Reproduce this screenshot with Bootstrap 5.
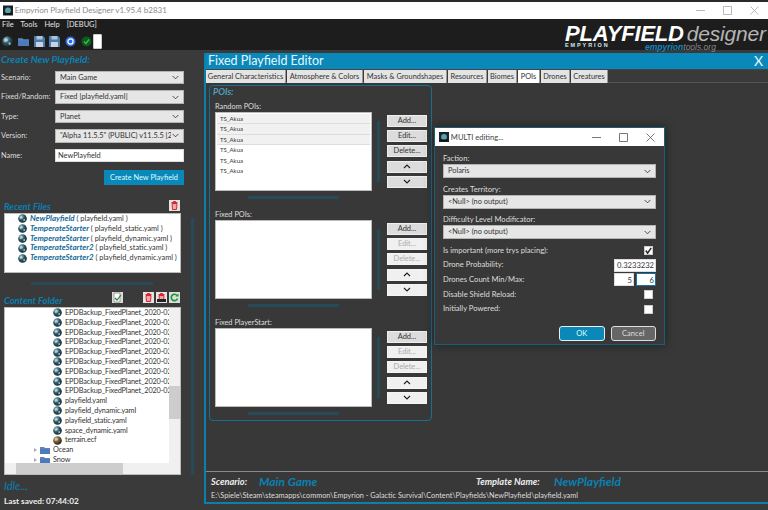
<!DOCTYPE html>
<html lang="en">
<head>
<meta charset="utf-8">
<title>Empyrion Playfield Designer</title>
<link href="https://cdn.jsdelivr.net/npm/bootstrap@5.3.0/dist/css/bootstrap.min.css" rel="stylesheet">
<script src="https://cdn.jsdelivr.net/npm/bootstrap@5.3.0/dist/js/bootstrap.bundle.min.js"></script>
<style>
html,body{margin:0;width:768px;height:510px;overflow:hidden;background:#3a3a3a;font-family:"Lato","Noto Sans",sans-serif;font-size:7.4px;color:#e8e8e8;line-height:1.2}
.defsv{display:block;width:0;height:0}
.appwin{width:768px;height:510px;position:relative}
.ttl{height:19px;background:#fff;border-top:2px solid #2a2a2a;color:#8b8b8b;font-size:8px;padding:0 0 0 3px}
.ctl{width:27px;height:9px;flex:none}
.ctl svg{width:9px;height:9px;display:block;margin:0 auto}
.hdr{height:31px;background:#1d1d1d;color:#ddd}
.mnu{gap:7px;padding:2px 0 0 2px;height:13px;font-size:7.4px;color:#e4e4e4}
.tool{gap:4.8px;padding:4px 0 0 2px}
.tool svg{width:11px;height:11px}
.tinybox{width:9px;height:15px;background:#fff;margin:-2px 0 0 -4px;border:1px solid #ccc;border-radius:1px}
.logo{position:relative;width:203px;color:#fff}
.logo-a{font:italic 700 22px/.8 "Liberation Sans",sans-serif;color:#fff;padding-top:6px;letter-spacing:-.2px;white-space:nowrap}
.logo-a i{font-weight:400;color:#b5b5b5;font-size:21px;letter-spacing:-.2px;margin-left:3px}
.logo-b{position:absolute;left:0;top:24px;font:700 5.5px/1 "Liberation Sans",sans-serif;letter-spacing:1.9px;color:#cfe6f2}
.logo-c{position:absolute;left:80px;top:24px;font:italic 700 8.5px/1 "Liberation Sans",sans-serif;color:#1187bd}
.logo-c span{font-weight:400;color:#888}
.mainrow{height:460px}
.leftp{width:204px;flex:none}
.leftc{width:184px;flex:none;padding-top:1px}
.splitv{width:3px;height:257px;margin:168px 0 0 7px;background:#274a58}
.hd{font:italic 700 9.8px/17px "Lato","Noto Sans",sans-serif;color:#0a81b3;height:20px;padding-left:1px}
.frm{gap:6px}
.frow{height:13.4px}
.frow label{width:55px;flex:none;padding-left:1px;color:#ddd;white-space:nowrap;line-height:13.4px}
.form-select.pick,.form-control.pick{font-size:7.4px;line-height:1;padding:0 12px 0 4px;height:100%;min-height:0;border-radius:0;border:1px solid #b4b4b4;background-color:#e6e6e6;color:#333;background-position:right 4px center;background-size:7px 7px;box-shadow:none}
.form-control.pick{background:#fff;padding:0 2px;border-color:#ddd}
.btn.newbtn{display:block;width:80px;height:15px;margin:8px 0 0 104px;padding:0;font-size:7.4px;line-height:13px;border-radius:0;background:#0a88ba;border:1px solid #0a88ba;color:#dff;white-space:nowrap}
.hd2{font:italic 700 9.4px/13px "Lato","Noto Sans",sans-serif;color:#0a7fb0;height:13px;margin-top:15px;padding:0 4px 0 4px}
.hd2b{height:15px;margin-top:7px;line-height:17px}
.ib{width:11px;height:11px;display:block}
.icgap{gap:2px}
.ibdoc{margin-right:18px}
.rbox{margin-left:4px;width:177px;height:60px;background:#fff;border:1px solid #bbb;padding:0 0 0 13px;color:#333}
.rrow{height:9.8px;white-space:nowrap;line-height:9.8px;font-size:7.3px}
.rrow svg,.trow svg{width:9px;height:9px;flex:none;margin-right:3px}
.rrow b{font:italic 700 8px/9.8px "Lato","Noto Sans",sans-serif;color:#146a98}
.hbar{height:3px;background:#274a58}
.hb1{width:122px;margin:9px 0 0 31px}
.treebox{margin-left:4px;width:177px;height:168px;background:#fff;border:1px solid #bbb;position:relative;overflow:hidden;color:#333}
.treein{width:165px;height:156px;overflow:hidden}
.trow{height:9.8px;line-height:9.8px;white-space:nowrap;padding-left:48px;font-size:7.3px;letter-spacing:-.12px}
.trow.fld{padding-left:29px}
.trow.fld svg{width:10px;height:8px}
.tri{width:0;height:0;border-left:3px solid #aaa;border-top:2.5px solid transparent;border-bottom:2.5px solid transparent;margin-right:3px}
.sbv{position:absolute;right:0;top:0;width:11px;height:155px;background:#f0f0f0}
.sbv i{position:absolute;left:0;top:78px;width:11px;height:33px;background:#cdcdcd}
.sbh{position:absolute;left:0;bottom:0;width:175px;height:11px;background:#f0f0f0}
.sbh i{position:absolute;left:11px;top:0;width:107px;height:11px;background:#cdcdcd}
.idle{font:italic 400 11px/12px "Lato","Noto Sans",sans-serif;color:#0a7fb0;margin-top:5px;padding-left:4px}
.saved{font:700 8.2px/10px "Lato","Noto Sans",sans-serif;color:#eee;margin-top:4px;padding-left:4px}
.editor{margin-top:3px;height:451px;border-left:2px solid #0a80ad;border-bottom:2px solid #0a80ad;background:#383838;min-width:0}
.edhead{height:16px;background:#0a88ba;color:#e6f7ff;font-size:12.5px;line-height:16px;padding:0 5px 0 2px}
.edhead span:last-child{font-size:14px}
.tabs{height:14px;border-top:1px solid #444;border-bottom:1px solid #555;padding:0;gap:1px;background:#3a3a3a}
.tabx{height:13px;background:#e4e4e4;color:#333;font-size:7.4px;line-height:13px;text-align:center;white-space:nowrap;overflow:hidden;border-right:1px solid #999}
.tabx.on{background:#fff}
.tw1{width:80px}.tw2{width:76px}.tw3{width:83px}.tw4{width:39px}.tw5{width:29px}.tw6{width:22px}.tw7{width:29px}.tw8{width:37px}
.grp{margin:2px 0 0 3px;width:223px;height:336px;border:1px solid #17708f;border-radius:4px;padding:0 0 0 5px}
.grpt{font:italic 700 9px/12px "Lato","Noto Sans",sans-serif;color:#4d9fbe;height:14px;margin-left:-2px}
.seclab{height:12px;line-height:13px;color:#ddd;font-size:7.4px}
.lbx{width:157px;height:79px;background:#fff;border:1px solid #bbb;padding:1px;color:#333}
.lit{height:10.4px;line-height:10px;font-size:6px;padding-left:3px;border-bottom:1px solid transparent}
.lit.sel{background:#f1f1f1;border-bottom-color:#ddd}
.vbar{width:3px;height:61px;margin:9px 0 0 5px;background:#274a58}
.btcol{margin:3px 0 0 7px;width:40px;gap:3.2px}
.btn.mini{height:12px;width:40px;padding:0;font-size:7.4px;line-height:10px;border-radius:0;background:#dcdcdc;border:1px solid #eee;color:#333;display:flex;align-items:center;justify-content:center}
.btn.mini.off{background:#f0f0f0;color:#aaa;opacity:1;border-color:#f4f4f4}
.btn.mini.off.dk{color:#222}
.btn.mini svg{width:8px;height:5px}
.hb2{width:91px;margin:5px 0 9px 33px}
.hb3{margin-bottom:0}
.edfoot{height:31px;border-top:1px solid #8a8a8a;padding:2px 0 0 5px}
.fl{font:italic 700 9.3px/15px "Lato","Noto Sans",sans-serif;color:#eee;white-space:nowrap}
.fv{font:italic 700 12px/15px "Lato","Noto Sans",sans-serif;color:#0a81b3;white-space:nowrap}
.fw1{width:48px}.fw2{width:217px}.fw3{width:78px}
.fpath{font-size:7.3px;line-height:13px;color:#ddd;white-space:nowrap}
.dlg{position:absolute;left:434px;top:127px;width:231px;height:218px;background:#383838;border:1px solid #17607c;box-shadow:0 0 10px rgba(0,0,0,.45)}
.dlgt{height:18px;background:#fff;color:#444;font-size:7.6px;line-height:18px;padding:0 0 0 4px}
.dlgb{padding:7px 8px 0 8px}
.dl{height:10px;line-height:10px;color:#ddd;font-size:7.6px}
.dsel{height:14px;margin:1px 0 5.5px;width:213px}
.drows{margin-top:-1px}
.drow{height:14.6px}
.drow span{flex-grow:1;color:#ddd;font-size:7.6px;margin-top:-1px}
.form-check-input.chk{width:9px;height:9px;margin:0 3px 0 0;border-radius:0;border:1px solid #ccc;background-color:#fff;box-shadow:none;opacity:1;float:none}
.form-check-input.chk:checked{background-color:#fff;background-size:9px;background-image:url("data:image/svg+xml,%3csvg xmlns='http://www.w3.org/2000/svg' viewBox='0 0 10 10'%3e%3cpath fill='none' stroke='%23222' stroke-width='1.6' d='M2 5l2 3 4-6'/%3e%3c/svg%3e")}
.form-control.num{width:42px;height:13px;min-height:0;padding:0 1px;font-size:7.6px;text-align:right;border-radius:0;border:1px solid #ddd;color:#333}
.form-control.num2{width:20px}
.form-control.num2.act{margin-left:2px;border-color:#1474a8}
.dbtns{margin-top:10px;gap:6px;padding-left:116px}
.btn.dok{width:49px;height:15px;padding:0;font-size:7.6px;line-height:13px;border-radius:3px;border:1px solid #eee;background:#0a88ba;color:#dff}
.btn.dca{background:#666;color:#ddd;border-color:#ddd}
</style>
</head>
<body>
<svg class="defsv" width="0" height="0">
<defs>
<radialGradient id="gl" cx=".35" cy=".3" r=".8"><stop offset="0" stop-color="#9fc4cc"/><stop offset=".45" stop-color="#2e5a68"/><stop offset="1" stop-color="#0c1c24"/></radialGradient>
<radialGradient id="gb" cx=".35" cy=".3" r=".8"><stop offset="0" stop-color="#c7b48a"/><stop offset=".5" stop-color="#6a5330"/><stop offset="1" stop-color="#201608"/></radialGradient>
<symbol id="globe" viewBox="0 0 10 10"><circle cx="5" cy="5" r="4.8" fill="url(#gl)"/><path d="M2 3c1-1 2-1 3 0s0 2-1 2-1 1-2 0zM6 6c1-1 2 0 2 1s-1 1-2 1z" fill="#c9dde0" opacity=".75"/></symbol>
<symbol id="brown" viewBox="0 0 10 10"><circle cx="5" cy="5" r="4.8" fill="url(#gb)"/><path d="M2 3c1-1 2-1 3 0s0 2-1 2-1 1-2 0z" fill="#e4d9b8" opacity=".7"/></symbol>
<symbol id="folder" viewBox="0 0 10 8"><path d="M0 1h4l1 1h5v6H0z" fill="#5b86c0"/><path d="M0 3h10v5H0z" fill="#4d7ab8"/></symbol>
<symbol id="floppy" viewBox="0 0 11 11"><path d="M0 0h9l2 2v9H0z" fill="#4f7aa8"/><path d="M2.500 0h6v3.500h-6z" fill="#a9c3da"/><path d="M2 6h7v5H2z" fill="#c4d4e4"/></symbol>
<symbol id="trash" viewBox="0 0 11 11"><path d="M0 0h11v11H0z" fill="#e4e4e4"/><path d="M3 3.500h5l-.5 6h-4zM2.500 2.500h6M4.500 2.500v-1h2v1" fill="#f6a5a5" stroke="#d8171d" stroke-width=".9"/></symbol>
<symbol id="cu" viewBox="0 0 8 5"><path d="M1 4l3-3 3 3" fill="none" stroke="#222" stroke-width="1.2"/></symbol>
<symbol id="cd" viewBox="0 0 8 5"><path d="M1 1l3 3 3-3" fill="none" stroke="#222" stroke-width="1.2"/></symbol>
<symbol id="appico" viewBox="0 0 12 12"><path d="M0 0h12v12H0z" fill="#16252c"/><circle cx="6" cy="6" r="3.500" fill="#5ca0a8"/><path d="M2 9h8v2H2z" fill="#0a0f12"/></symbol>
<symbol id="wmin" viewBox="0 0 9 9"><path d="M0 4.500h9" stroke="#555" stroke-width=".8"/></symbol>
<symbol id="wmax" viewBox="0 0 9 9"><path d="M.5.500h8v8h-8z" fill="none" stroke="#555" stroke-width=".8"/></symbol>
<symbol id="wcls" viewBox="0 0 9 9"><path d="M.5.500l8 8M8.500.500l-8 8" stroke="#555" stroke-width=".8"/></symbol>
</defs>
</svg>
<div class="appwin d-flex flex-column">
  <div class="ttl d-flex align-items-center">
    <svg width="10" height="11" class="me-1 flex-none"><use href="#appico"/></svg>
    <span class="flex-grow-1">Empyrion Playfield Designer v1.95.4 b2831</span>
    <span class="ctl"><svg class="opacity-50"><use href="#wmin"/></svg></span><span class="ctl"><svg class="opacity-50"><use href="#wmax"/></svg></span><span class="ctl"><svg class="opacity-50"><use href="#wcls"/></svg></span>
  </div>
  <div class="hdr d-flex justify-content-between">
    <div>
      <div class="mnu d-flex"><span>File</span><span>Tools</span><span>Help</span><span>[DEBUG]</span></div>
      <div class="tool d-flex">
        <svg><use href="#globe"/></svg>
        <svg viewBox="0 0 10 8"><use href="#folder"/></svg>
        <svg><use href="#floppy"/></svg>
        <svg><use href="#floppy"/></svg>
        <svg viewBox="0 0 11 11"><circle cx="5.500" cy="5.500" r="5" fill="#2e6fe0"/><circle cx="5.500" cy="5.500" r="2.600" fill="none" stroke="#fff" stroke-width="1.200"/></svg>
        <svg viewBox="0 0 11 11"><circle cx="5.500" cy="5.500" r="5" fill="#0d5c1b"/><path d="M3 5.500l2 2 3-4" fill="none" stroke="#33c24d" stroke-width="1.300"/></svg>
        <div class="tinybox"></div>
      </div>
    </div>
    <div class="logo">
      <div class="logo-a">PLAYFIELD<i>designer</i></div>
      <div class="logo-b">EMPYRION</div>
      <div class="logo-c">empyrion<span>tools.org</span></div>
    </div>
  </div>
  <div class="mainrow d-flex">
    <div class="leftp d-flex">
      <div class="leftc">
        <div class="hd">Create New Playfield:</div>
        <div class="frm d-flex flex-column">
          <div class="frow d-flex"><label>Scenario:</label><select class="form-select pick"><option>Main Game</option></select></div>
          <div class="frow d-flex"><label>Fixed/Random:</label><select class="form-select pick"><option>Fixed [playfield.yaml]</option></select></div>
          <div class="frow d-flex"><label>Type:</label><select class="form-select pick"><option>Planet</option></select></div>
          <div class="frow d-flex"><label>Version:</label><select class="form-select pick"><option>"Alpha 11.5.5" (PUBLIC) v11.5.5 [27</option></select></div>
          <div class="frow d-flex"><label>Name:</label><input class="form-control pick" value="NewPlayfield"></div>
        </div>
        <button class="btn newbtn">Create New Playfield</button>
        <div class="hd2 d-flex justify-content-between">Recent Files<svg class="ib"><use href="#trash"/></svg></div>
        <div class="rbox">
          <div class="rrow d-flex align-items-center"><svg><use href="#globe"/></svg><b>NewPlayfield</b>&nbsp;( playfield.yaml )</div>
          <div class="rrow d-flex align-items-center"><svg><use href="#globe"/></svg><b>TemperateStarter</b>&nbsp;( playfield_static.yaml )</div>
          <div class="rrow d-flex align-items-center"><svg><use href="#globe"/></svg><b>TemperateStarter</b>&nbsp;( playfield_dynamic.yaml )</div>
          <div class="rrow d-flex align-items-center"><svg><use href="#globe"/></svg><b>TemperateStarter2</b>&nbsp;( playfield_static.yaml )</div>
          <div class="rrow d-flex align-items-center"><svg><use href="#globe"/></svg><b>TemperateStarter2</b>&nbsp;( playfield_dynamic.yaml )</div>
        </div>
        <div class="hbar hb1"></div>
        <div class="hd2 hd2b d-flex">Content Folder
          <span class="d-flex icgap ms-auto">
            <svg class="ib ibdoc" viewBox="0 0 11 11"><path d="M0 0h11v11H0z" fill="#ddd"/><path d="M2 1h6v9H2z" fill="#fff" stroke="#777" stroke-width=".7"/><path d="M3 6l2 2 4-5" fill="none" stroke="#1b8a2c" stroke-width="1.200"/></svg>
            <svg class="ib"><use href="#trash"/></svg>
            <svg class="ib" viewBox="0 0 11 11"><use href="#trash" width="11" height="11"/><path d="M1 7h9v3H1z" fill="#222"/></svg>
            <svg class="ib" viewBox="0 0 11 11"><path d="M0 0h11v11H0z" fill="#ddd"/><path d="M8 3.500a3.200 3.200 0 1 0 .5 3" fill="none" stroke="#169a2c" stroke-width="1.600"/><path d="M6.500 4.500h3v-3z" fill="#169a2c"/></svg>
          </span>
        </div>
        <div class="treebox">
          <div class="treein">
            <div class="trow d-flex align-items-center"><svg><use href="#globe"/></svg>EPDBackup_FixedPlanet_2020-02</div>
            <div class="trow d-flex align-items-center"><svg><use href="#globe"/></svg>EPDBackup_FixedPlanet_2020-02</div>
            <div class="trow d-flex align-items-center"><svg><use href="#globe"/></svg>EPDBackup_FixedPlanet_2020-02</div>
            <div class="trow d-flex align-items-center"><svg><use href="#globe"/></svg>EPDBackup_FixedPlanet_2020-02</div>
            <div class="trow d-flex align-items-center"><svg><use href="#globe"/></svg>EPDBackup_FixedPlanet_2020-02</div>
            <div class="trow d-flex align-items-center"><svg><use href="#globe"/></svg>EPDBackup_FixedPlanet_2020-02</div>
            <div class="trow d-flex align-items-center"><svg><use href="#globe"/></svg>EPDBackup_FixedPlanet_2020-02</div>
            <div class="trow d-flex align-items-center"><svg><use href="#globe"/></svg>EPDBackup_FixedPlanet_2020-02</div>
            <div class="trow d-flex align-items-center"><svg><use href="#globe"/></svg>EPDBackup_FixedPlanet_2020-02</div>
            <div class="trow d-flex align-items-center"><svg><use href="#globe"/></svg>playfield.yaml</div>
            <div class="trow d-flex align-items-center"><svg><use href="#globe"/></svg>playfield_dynamic.yaml</div>
            <div class="trow d-flex align-items-center"><svg><use href="#globe"/></svg>playfield_static.yaml</div>
            <div class="trow d-flex align-items-center"><svg><use href="#globe"/></svg>space_dynamic.yaml</div>
            <div class="trow d-flex align-items-center"><svg><use href="#brown"/></svg>terrain.ecf</div>
            <div class="trow fld d-flex align-items-center"><span class="tri"></span><svg><use href="#folder"/></svg>Ocean</div>
            <div class="trow fld d-flex align-items-center"><span class="tri"></span><svg><use href="#folder"/></svg>Snow</div>
          </div>
          <div class="sbv"><i></i></div>
          <div class="sbh"><i></i></div>
        </div>
        <div class="idle">Idle...</div>
        <div class="saved">Last saved: 07:44:02</div>
      </div>
      <div class="splitv"></div>
    </div>
    <div class="editor flex-grow-1 d-flex flex-column">
      <div class="edhead d-flex justify-content-between"><span>Fixed Playfield Editor</span><span>X</span></div>
      <div class="tabs d-flex">
        <div class="tabx tw1">General Characteristics</div><div class="tabx tw2">Atmosphere &amp; Colors</div><div class="tabx tw3">Masks &amp; Groundshapes</div><div class="tabx tw4">Resources</div><div class="tabx tw5">Biomes</div><div class="tabx tw6 on">POIs</div><div class="tabx tw7">Drones</div><div class="tabx tw8">Creatures</div>
      </div>
      <div class="flex-grow-1">
        <div class="grp">
          <div class="grpt">POIs:</div>
          <div class="seclab">Random POIs:</div>
          <div class="d-flex">
            <div class="lbx">
              <div class="lit sel">TS_Akua</div><div class="lit sel">TS_Akua</div><div class="lit sel">TS_Akua</div><div class="lit">TS_Akua</div><div class="lit">TS_Akua</div><div class="lit">TS_Akua</div>
            </div>
            <div class="vbar"></div>
            <div class="btcol d-flex flex-column">
              <button class="btn mini">Add...</button><button class="btn mini">Edit...</button><button class="btn mini">Delete...</button>
              <button class="btn mini"><svg><use href="#cu"/></svg></button><button class="btn mini"><svg><use href="#cd"/></svg></button>
            </div>
          </div>
          <div class="hbar hb2"></div>
          <div class="seclab">Fixed POIs:</div>
          <div class="d-flex">
            <div class="lbx"></div>
            <div class="vbar"></div>
            <div class="btcol d-flex flex-column">
              <button class="btn mini">Add...</button><button class="btn mini off">Edit...</button><button class="btn mini off">Delete...</button>
              <button class="btn mini off dk"><svg><use href="#cu"/></svg></button><button class="btn mini off dk"><svg><use href="#cd"/></svg></button>
            </div>
          </div>
          <div class="hbar hb2"></div>
          <div class="seclab">Fixed PlayerStart:</div>
          <div class="d-flex">
            <div class="lbx"></div>
            <div class="vbar"></div>
            <div class="btcol d-flex flex-column">
              <button class="btn mini">Add...</button><button class="btn mini off">Edit...</button><button class="btn mini off">Delete...</button>
              <button class="btn mini off dk"><svg><use href="#cu"/></svg></button><button class="btn mini off dk"><svg><use href="#cd"/></svg></button>
            </div>
          </div>
          <div class="hbar hb2 hb3"></div>
        </div>
      </div>
      <div class="edfoot">
        <div class="d-flex align-items-center">
          <span class="fl fw1">Scenario:</span><span class="fv fw2">Main Game</span><span class="fl fw3">Template Name:</span><span class="fv">NewPlayfield</span>
        </div>
        <div class="fpath">E:\Spiele\Steam\steamapps\common\Empyrion - Galactic Survival\Content\Playfields\NewPlayfield\playfield.yaml</div>
      </div>
    </div>
  </div>
  <div class="dlg">
    <div class="dlgt d-flex align-items-center">
      <svg width="10" height="10" class="me-1"><use href="#appico"/></svg>
      <span class="flex-grow-1">MULTI editing...</span>
      <span class="ctl"><svg><use href="#wmin"/></svg></span><span class="ctl"><svg><use href="#wmax"/></svg></span><span class="ctl"><svg><use href="#wcls"/></svg></span>
    </div>
    <div class="dlgb">
      <div class="dl">Faction:</div>
      <div class="dsel"><select class="form-select pick"><option>Polaris</option></select></div>
      <div class="dl">Creates Territory:</div>
      <div class="dsel"><select class="form-select pick"><option>&lt;Null&gt; (no output)</option></select></div>
      <div class="dl">Difficulty Level Modificator:</div>
      <div class="dsel"><select class="form-select pick"><option>&lt;Null&gt; (no output)</option></select></div>
      <div class="drows">
      <div class="drow d-flex align-items-center"><span>Is important (more trys placing):</span><input class="form-check-input chk" type="checkbox" checked></div>
      <div class="drow d-flex align-items-center"><span>Drone Probability:</span><input class="form-control num" value="0.3233232"></div>
      <div class="drow d-flex align-items-center"><span>Drones Count Min/Max:</span><input class="form-control num num2" value="5"><input class="form-control num num2 act" value="6"></div>
      <div class="drow d-flex align-items-center"><span>Disable Shield Reload:</span><input class="form-check-input chk" type="checkbox"></div>
      <div class="drow d-flex align-items-center"><span>Initially Powered:</span><input class="form-check-input chk" type="checkbox"></div>
      </div>
      <div class="dbtns d-flex"><button class="btn dok">OK</button><button class="btn dok dca">Cancel</button></div>
    </div>
  </div>
</div>
</body>
</html>
